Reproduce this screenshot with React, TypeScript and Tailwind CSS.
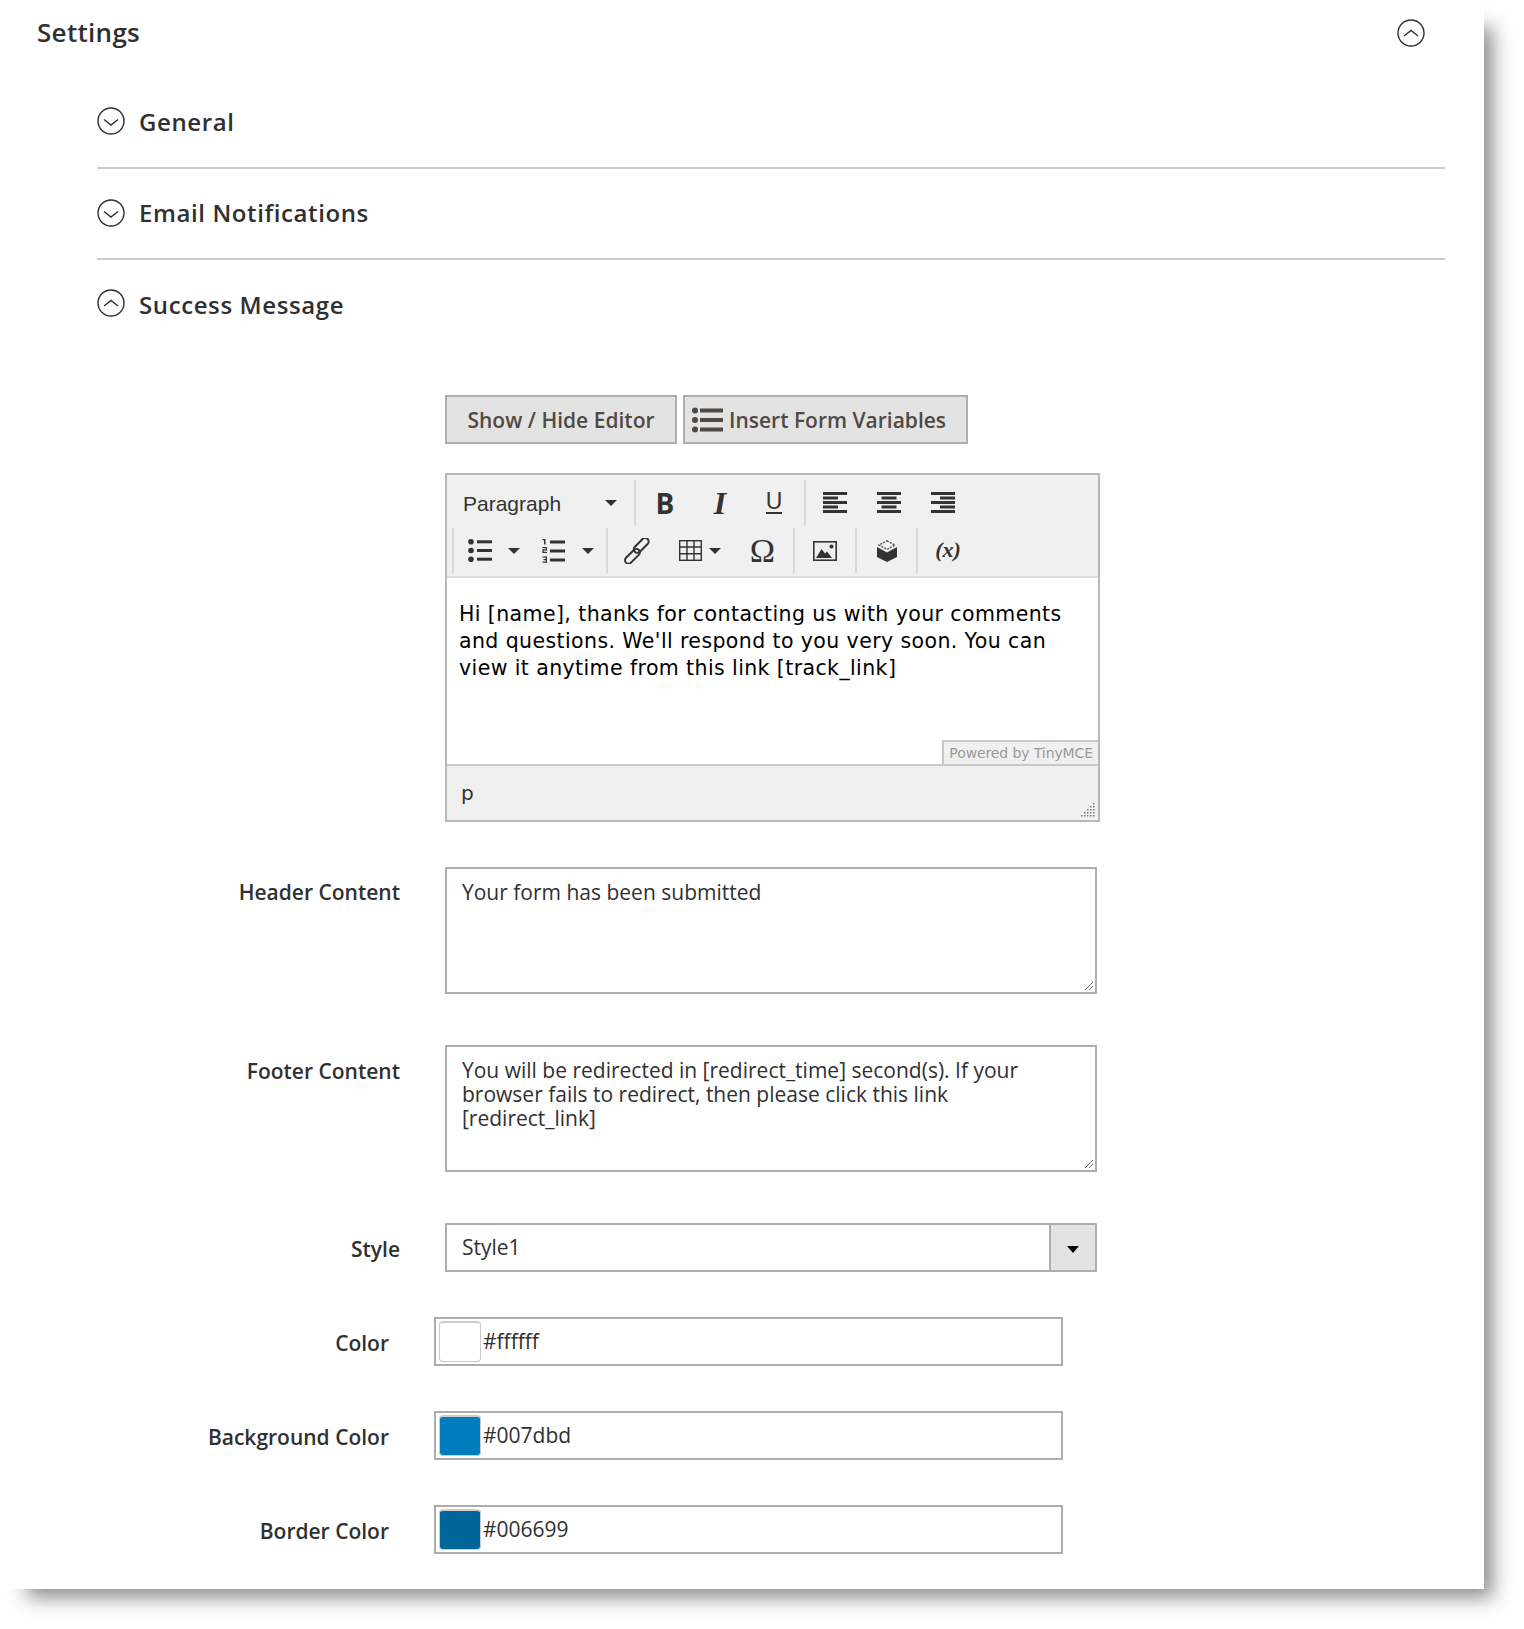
const sans = "font-['Open_Sans',sans-serif]"

function Toggle({ open }: { open: boolean }) {
  return (
    <svg className="shrink-0" width="28" height="28" viewBox="0 0 28 28" fill="none" stroke="#303030" strokeWidth="1.4">
      <circle cx="14" cy="14" r="13" />
      <path d={open ? 'M7 17l7-5.5 7 5.5' : 'M7 12.5l7 5.5 7-5.5'} />
    </svg>
  )
}

function SectionRow({ title, open, border, height, textPad }: { title: string; open: boolean; border: boolean; height: string; textPad: string }) {
  return (
    <div className={`ml-[97px] flex w-[1348px] items-center gap-[14px] pb-[2px] ${height} ${border ? 'border-b-2 border-[#cccccc]' : ''}`}>
      <Toggle open={open} />
      <span className={`text-[24px] font-semibold tracking-[0.6px] text-[#303030] ${textPad}`}>{title}</span>
    </div>
  )
}

function Caret() {
  return <span className="block h-0 w-0 shrink-0 border-x-[6px] border-t-[6px] border-x-transparent border-t-[#333333]" />
}

function Sep() {
  return <span className="block h-[45px] w-[2px] shrink-0 bg-[#d9d9d9]" />
}

function Lines({ align }: { align: 'left' | 'center' | 'right' }) {
  const short = align === 'left' ? 0 : align === 'center' ? 4.5 : 9
  return (
    <svg width="24" height="21" viewBox="0 0 24 21" fill="#333333">
      <rect x="0" y="0" width="24" height="3" />
      <rect x={short} y="4.5" width="15" height="3" />
      <rect x="0" y="9" width="24" height="3" />
      <rect x={short} y="13.5" width="15" height="3" />
      <rect x="0" y="18" width="24" height="3" />
    </svg>
  )
}

function BulletList() {
  return (
    <svg className="shrink-0" width="24" height="23" viewBox="0 0 24 23" fill="#333333">
      <circle cx="3" cy="2.8" r="2.8" />
      <circle cx="3" cy="11.5" r="2.8" />
      <circle cx="3" cy="20.2" r="2.8" />
      <rect x="9" y="1.3" width="15" height="3" />
      <rect x="9" y="10" width="15" height="3" />
      <rect x="9" y="18.7" width="15" height="3" />
    </svg>
  )
}

function NumberList() {
  return (
    <svg className="shrink-0" width="23" height="24" viewBox="0 0 23 24" fill="#333333">
      <rect x="2" y="0" width="1.5" height="5.5" />
      <rect x="0.5" y="0" width="2" height="1.2" />
      <rect x="0.5" y="8" width="4.5" height="1.2" />
      <rect x="3.8" y="8" width="1.2" height="3" />
      <rect x="0.5" y="10.4" width="4.5" height="1.2" />
      <rect x="0.5" y="10.4" width="1.2" height="3" />
      <rect x="0.5" y="12.8" width="4.5" height="1.2" />
      <rect x="0.5" y="17.5" width="4.5" height="1.2" />
      <rect x="1.5" y="20" width="3.5" height="1.2" />
      <rect x="0.5" y="22.5" width="4.5" height="1.2" />
      <rect x="3.8" y="17.5" width="1.2" height="6" />
      <rect x="8" y="1.5" width="15" height="3" />
      <rect x="8" y="10.5" width="15" height="3" />
      <rect x="8" y="19.5" width="15" height="3" />
    </svg>
  )
}

function LinkIcon() {
  return (
    <svg width="26" height="26" viewBox="0 0 26 26" fill="none" stroke="#333333" strokeWidth="2">
      <g transform="rotate(-45 13 13)">
        <rect x="-3" y="10" width="18" height="7" rx="3.5" />
        <rect x="11" y="8.500" width="18" height="7" rx="3.5" />
      </g>
    </svg>
  )
}

function TableIcon() {
  return (
    <svg className="shrink-0" width="23" height="21" viewBox="0 0 23 21" fill="none" stroke="#333333" strokeWidth="1.4">
      <rect x="0.7" y="0.7" width="21.6" height="19.6" />
      <path d="M1 7h21M1 13.8h21M8 1v19M15 1v19" />
    </svg>
  )
}

function ImageIcon() {
  return (
    <svg width="24" height="20" viewBox="0 0 24 20">
      <rect x="0.8" y="0.8" width="22.4" height="18.4" fill="none" stroke="#333333" strokeWidth="1.6" />
      <path d="M3 17l5.500-9 3.500 4.500 2-2 5 6.500z" fill="#333333" />
      <circle cx="18.500" cy="5.500" r="2" fill="#333333" />
    </svg>
  )
}

function TemplateIcon() {
  return (
    <svg width="20" height="22" viewBox="0 0 20 22" fill="#333333">
      <path d="M10 0.800l8 4.300-8 4.300-8-4.300z" fill="none" stroke="#555555" strokeWidth="1.400" strokeDasharray="2 1.200" />
      <path d="M0 7l10 5.500L20 7v10l-10 5-10-5z" />
    </svg>
  )
}

function Cell({ w, children }: { w: string; children: React.ReactNode }) {
  return <div className={`flex shrink-0 items-center justify-center ${w}`}>{children}</div>
}

const gripDots: number[][] = []
for (let row = 0; row < 5; row++) {
  for (let col = 4 - row; col < 5; col++) {
    gripDots.push([col * 3 + 1, row * 3 + 1])
  }
}

function Editor() {
  return (
    <div className="w-[655px] border-2 border-[#b9b9b9]">
      <div className="h-[103px] border-b-2 border-[#dcdcdc] bg-[#f0f0f0] pt-[5px]">
        <div className="flex h-[45px] items-center">
          <div className="flex w-[187px] items-center justify-between pl-[16px] pr-[17px] font-['Liberation_Sans',sans-serif] text-[21px] text-[#333333]">
            <span className="pt-[2px]">Paragraph</span>
            <Caret />
          </div>
          <Sep />
          <Cell w="w-[58px]"><span className="text-[28px] font-bold leading-none text-[#333333]">B</span></Cell>
          <Cell w="w-[52px]"><span className="font-['Liberation_Serif',serif] text-[32px] font-bold italic leading-none text-[#333333]">I</span></Cell>
          <Cell w="w-[56px]">
            <span className="border-b-2 border-[#333333] font-['Liberation_Sans',sans-serif] text-[23px] leading-[21px] text-[#333333]">U</span>
          </Cell>
          <span className="ml-[2px] block"><Sep /></span>
          <Cell w="w-[54px] ml-[2px]"><Lines align="left" /></Cell>
          <Cell w="w-[54px]"><Lines align="center" /></Cell>
          <Cell w="w-[54px]"><Lines align="right" /></Cell>
        </div>
        <div className="mt-[3px] flex h-[45px] items-center">
          <span className="ml-[5px] block"><Sep /></span>
          <div className="flex w-[76px] shrink-0 items-center gap-[16px] pl-[14px]"><BulletList /><Caret /></div>
          <div className="flex w-[76px] shrink-0 items-center gap-[17px] pl-[12px]"><NumberList /><Caret /></div>
          <Sep />
          <Cell w="w-[58px]"><LinkIcon /></Cell>
          <div className="flex w-[66px] shrink-0 items-center gap-[7px] pl-[13px]"><TableIcon /><Caret /></div>
          <Cell w="w-[61px]"><span className="font-['Liberation_Serif',serif] text-[34px] leading-none text-[#333333]">Ω</span></Cell>
          <Sep />
          <Cell w="w-[60px]"><ImageIcon /></Cell>
          <Sep />
          <Cell w="w-[59px]"><TemplateIcon /></Cell>
          <Sep />
          <Cell w="w-[60px]"><span className="pb-[2px] font-['Liberation_Serif',serif] text-[22px] font-bold italic text-[#333333]">(x)</span></Cell>
        </div>
      </div>
      <div className="relative h-[186px] bg-white pl-[12px] pr-[20px] pt-[23px] font-['DejaVu_Sans',sans-serif] text-[20.5px] leading-[27px] tracking-[0.4px] text-black">
        <p>Hi [name], thanks for contacting us with your comments and questions. We'll respond to you very soon. You can view it anytime from this link [track_link]</p>
        <span className="absolute bottom-0 right-0 border-l-2 border-t-2 border-[#c8c8c8] bg-[#f0f0f0] px-[5px] text-[14px] leading-[22px] tracking-[-0.1px] text-[#999999]">Powered by TinyMCE</span>
      </div>
      <div className="relative flex h-[56px] items-center border-t-2 border-[#c8c8c8] bg-[#f0f0f0] pl-[14px] font-['DejaVu_Sans',sans-serif] text-[20px] text-[#333333]">
        p
        <svg className="absolute bottom-[3px] right-[3px]" width="15" height="15" viewBox="0 0 15 15" fill="#777777">
          {gripDots.map(([x, y]) => (
            <rect key={`${x}-${y}`} x={x} y={y} width="1.5" height="1.5" />
          ))}
        </svg>
      </div>
    </div>
  )
}

function Grip() {
  return (
    <svg className="absolute bottom-[2px] right-[2px]" width="9" height="9" viewBox="0 0 9 9" stroke="#666666" strokeWidth="1">
      <path d="M1 9l8-8M5 9l4-4" />
    </svg>
  )
}

function AreaField({ label, text, mt, labelPad }: { label: string; text: string; mt: string; labelPad: string }) {
  return (
    <div className={`flex ${mt}`}>
      <div className={`w-[400px] text-right text-[21px] font-semibold text-[#303030] ${labelPad}`}>{label}</div>
      <div className="relative ml-[45px] h-[127px] w-[652px] border-2 border-[#adadad] bg-white pb-[10px] pl-[15px] pr-[40px] pt-[11px] text-[21px] leading-[24px] text-[#303030]">
        {text}
        <Grip />
      </div>
    </div>
  )
}

function ColorField({ label, color }: { label: string; color: string }) {
  return (
    <div className="mt-[45px] flex items-center">
      <div className="w-[389px] pt-[4px] text-right text-[21px] font-semibold text-[#303030]">{label}</div>
      <div className="ml-[45px] flex h-[49px] w-[629px] items-center border-2 border-[#adadad] bg-white pl-[3px] text-[21px] text-[#303030]">
        <span className="h-[41px] w-[42px] rounded-[4px] border border-t-2 border-[#cccccc]" style={{ backgroundColor: color }} />
        <span className="ml-[2px]">{color}</span>
      </div>
    </div>
  )
}

export default function App() {
  return (
    <div className={`h-[1629px] w-[1524px] bg-white ${sans}`}>
      <div className="h-[1589px] w-[1484px] bg-white shadow-[18px_18px_18px_-9px_rgba(0,0,0,0.44)]">
        <div className="flex h-[77px] items-start justify-between pl-[37px] pr-[59px] pt-[14px]">
          <span className="text-[26px] font-semibold leading-[36px] tracking-[0.3px] text-[#303030]">Settings</span>
          <span className="mt-[5px]"><Toggle open /></span>
        </div>
        <SectionRow title="General" open={false} border height="h-[92px]" textPad="pt-[1px]" />
        <SectionRow title="Email Notifications" open={false} border height="h-[91px]" textPad="pt-[1px]" />
        <SectionRow title="Success Message" open border={false} height="h-[88px]" textPad="pt-[3px]" />

        <div className="ml-[445px] mt-[47px] flex gap-[6px]">
          <button className="h-[49px] w-[232px] border-2 border-[#adadad] bg-[#e3e3e3] pt-[2px] text-[21px] font-semibold text-[#514943]">Show / Hide Editor</button>
          <button className="flex h-[49px] w-[285px] items-center gap-[6px] border-2 border-[#adadad] bg-[#e3e3e3] pl-[7px] text-[21px] font-semibold text-[#514943]">
            <svg width="31" height="26" viewBox="0 0 31 26" fill="#514943">
              <circle cx="3" cy="3.5" r="3" />
              <circle cx="3" cy="13" r="3" />
              <circle cx="3" cy="22.5" r="3" />
              <rect x="8" y="1.5" width="23" height="4" />
              <rect x="8" y="11" width="23" height="4" />
              <rect x="8" y="20.5" width="23" height="4" />
            </svg>
            <span className="pt-[2px]">Insert Form Variables</span>
          </button>
        </div>

        <div className="ml-[445px] mt-[29px]">
          <Editor />
        </div>

        <AreaField label="Header Content" labelPad="pt-[10px]" text="Your form has been submitted" mt="mt-[45px]" />
        <AreaField label="Footer Content" labelPad="pt-[11px]" text="You will be redirected in [redirect_time] second(s). If your browser fails to redirect, then please click this link [redirect_link]" mt="mt-[51px]" />

        <div className="mt-[51px] flex items-center">
          <div className="w-[400px] pt-[4px] text-right text-[21px] font-semibold text-[#303030]">Style</div>
          <div className="ml-[45px] flex h-[49px] w-[652px] border-2 border-[#adadad] bg-white text-[21px] text-[#303030]">
            <span className="flex flex-1 items-center pl-[15px]">Style1</span>
            <span className="-my-[2px] -mr-[2px] flex h-[49px] w-[48px] items-center justify-center border-2 border-[#adadad] bg-[#e3e3e3]">
              <span className="mt-[4px] h-0 w-0 border-x-[6px] border-t-[7px] border-x-transparent border-t-black" />
            </span>
          </div>
        </div>

        <ColorField label="Color" color="#ffffff" />
        <ColorField label="Background Color" color="#007dbd" />
        <ColorField label="Border Color" color="#006699" />
      </div>
    </div>
  )
}
